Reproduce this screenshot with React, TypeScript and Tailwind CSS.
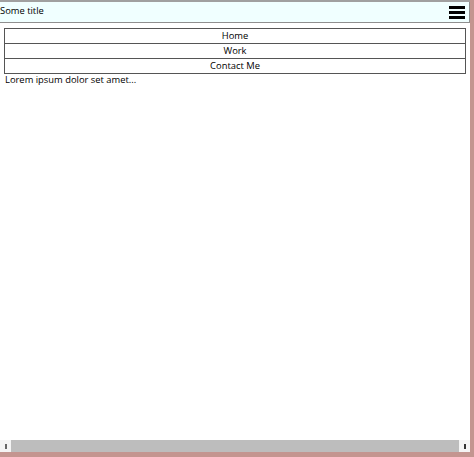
const links = ["Home", "Work", "Contact Me"];

export default function App() {
  return (
    <div className="flex h-[457px] w-[474px] flex-col bg-[#c49590] font-['Open_Sans',sans-serif] text-[9.4px] text-black">
      <div className="flex h-[452px] w-[470px] flex-col border-t-2 border-[#a0a0a0] bg-white">
        {/* header */}
        <header className="flex h-[21px] items-center justify-between border-b border-r border-[#8f8f8f] bg-[#f0ffff] pr-[4px]">
          <span className="-mt-[2px]">Some title</span>
          <div className="flex w-[16px] flex-col gap-[2px]">
            <span className="h-[3px] bg-black" />
            <span className="h-[3px] bg-black" />
            <span className="h-[3px] bg-black" />
          </div>
        </header>

        {/* nav */}
        <nav className="mx-[4px] mt-[5px] flex flex-col border border-b-0 border-[#555]">
          {links.map((l) => (
            <a
              key={l}
              href="#"
              className="flex h-[15px] items-center justify-center border-b border-[#555] leading-none"
            >
              {l}
            </a>
          ))}
        </nav>

        <p className="-mt-px pl-[5px]">Lorem ipsum dolor set amet...</p>

        <div className="flex-1" />

        {/* horizontal scrollbar */}
        <div className="flex h-[12px] items-stretch bg-[#f4f4f4]">
          <div className="flex w-[11px] items-center justify-center">
            <span className="h-[5px] w-[2px] bg-[#666]" />
          </div>
          <div className="flex-1 bg-[#bdbdbd]" />
          <div className="flex w-[11px] items-center justify-center">
            <span className="h-[5px] w-[2px] bg-[#333]" />
          </div>
        </div>
      </div>
    </div>
  );
}
